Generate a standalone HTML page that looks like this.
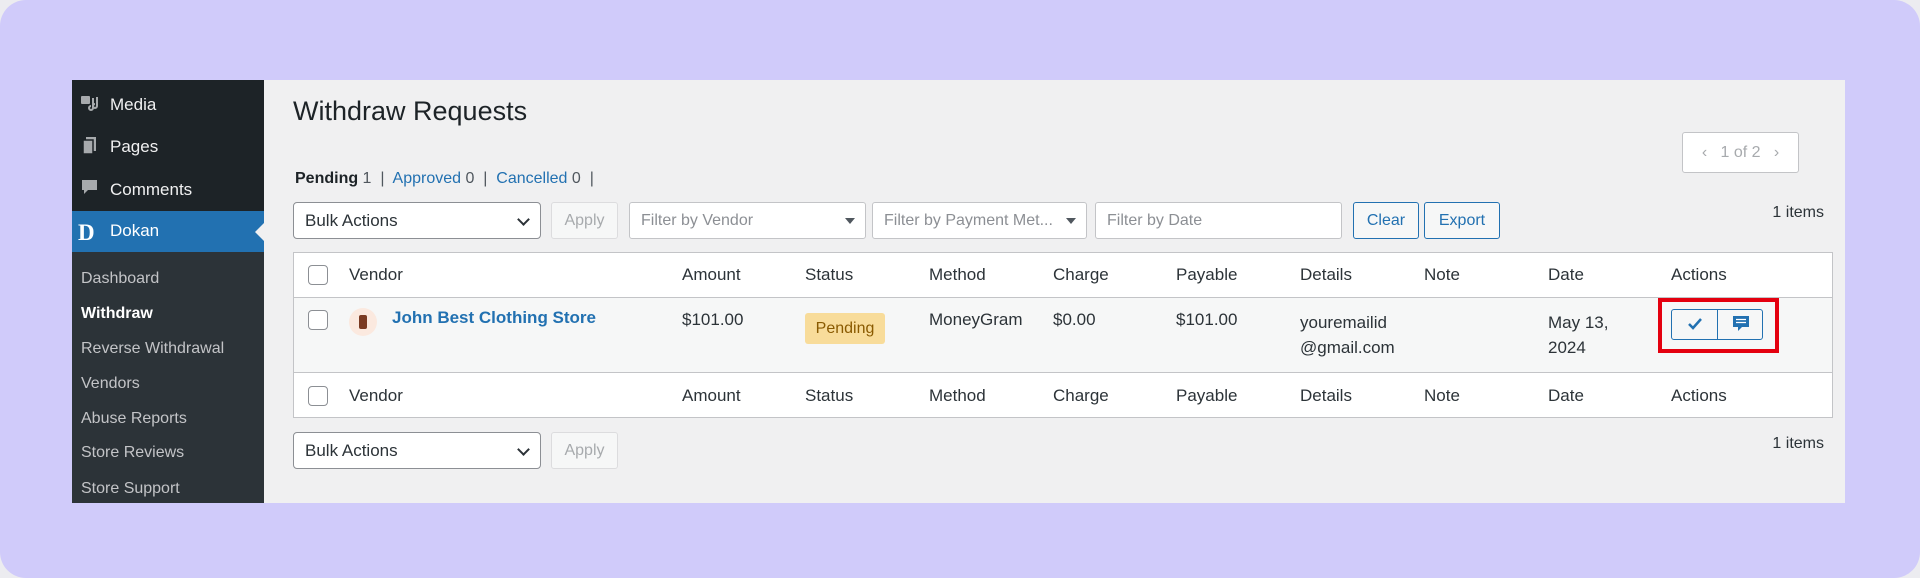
<!DOCTYPE html>
<html><head><style>
*{box-sizing:border-box;margin:0;padding:0}
body{width:1920px;height:578px;background:#ececf0;font-family:"Liberation Sans",sans-serif;position:relative;overflow:hidden}
.bg{position:absolute;left:0;top:0;width:1920px;height:578px;background:#d0cbfa;border-radius:26px}
.panel{position:absolute;left:72px;top:80px;width:1773px;height:423px;background:#f0f0f1}
.side{position:absolute;left:0;top:0;width:192px;height:423px;background:#2c3338}
.sidetop{position:absolute;left:0;top:0;width:192px;height:131px;background:#1d2327}
.a{position:absolute;color:#f0f0f1;font-size:17px;left:38px}
.ic{position:absolute;left:8px;width:20px;height:20px}
.dok{position:absolute;left:0;top:131px;width:192px;height:41px;background:#2271b1}
.s{position:absolute;left:9px;color:#c3c4c7;font-size:16px}
.abs{position:absolute}
.sel{position:absolute;background:#fff;border:1px solid #8c8f94;border-radius:4px;font-size:17px;color:#2c3338;padding:8px 11px;height:37px}
.btn{position:absolute;border:1px solid #dcdcde;border-radius:3px;color:#a7aaad;background:#f6f7f7;font-size:16px;text-align:center;padding-top:9px;height:37px}
.inp{position:absolute;background:#fff;border:1px solid #c3c4c7;border-radius:3px;color:#8c8f94;font-size:16px;padding:9px 11px;height:37px}
.bb{position:absolute;border:1px solid #2271b1;border-radius:3px;color:#2271b1;background:#f6f7f7;font-size:16px;text-align:center;padding-top:9px;height:37px}
.tbl{position:absolute;left:221px;top:172px;width:1540px;height:166px;background:#fff;border:1px solid #c3c4c7}
.row{position:absolute;left:0;width:1538px;background:#f6f7f7;top:44px;height:76px;border-top:1px solid #c3c4c7;border-bottom:1px solid #c3c4c7}
.t{position:absolute;font-size:17px;color:#2c3338}
.cb{position:absolute;left:14px;width:20px;height:20px;border:1px solid #8c8f94;border-radius:4px;background:#fff}
.chev{position:absolute;right:12px;top:12px;width:9px;height:9px;border-right:2px solid #2c3338;border-bottom:2px solid #2c3338;transform:rotate(45deg)}
.tri{position:absolute;right:10px;top:15px;border-left:5px solid transparent;border-right:5px solid transparent;border-top:6px solid #50575e}
</style></head><body>
<div class="bg"></div>
<div class="panel">
 <div class="side">
  <div class="sidetop"></div>
  <svg class="ic" style="top:14px" viewBox="0 0 20 20"><rect x="1" y="2" width="9" height="8" rx="1" fill="#a7aaad"/><path d="M13 4v10a2 2 0 1 1-2-2M17 3v9a2 2 0 1 1-2-2" stroke="#a7aaad" stroke-width="2" fill="none"/></svg>
  <div class="a" style="top:15px">Media</div>
  <svg class="ic" style="top:56px" viewBox="0 0 20 20"><rect x="6" y="1" width="10" height="14" fill="#a7aaad"/><rect x="3" y="4" width="10" height="14" fill="#a7aaad" stroke="#1d2327" stroke-width="1.5"/></svg>
  <div class="a" style="top:57px">Pages</div>
  <svg class="ic" style="top:98px" viewBox="0 0 20 20"><path d="M2 2h15v10H8l-4 4v-4H2z" fill="#a7aaad"/></svg>
  <div class="a" style="top:100px">Comments</div>
  <div class="dok"><div style="position:absolute;left:6px;top:9px;color:#fff;font-weight:bold;font-size:23px;font-family:'Liberation Serif',serif">D</div><div class="a" style="top:10px;color:#fff">Dokan</div>
   <div style="position:absolute;right:0;top:12px;border-top:9px solid transparent;border-bottom:9px solid transparent;border-right:9px solid #f0f0f1"></div></div>
  <div class="s" style="top:190px">Dashboard</div>
  <div class="s" style="top:225px;color:#fff;font-weight:bold">Withdraw</div>
  <div class="s" style="top:260px">Reverse Withdrawal</div>
  <div class="s" style="top:295px">Vendors</div>
  <div class="s" style="top:330px">Abuse Reports</div>
  <div class="s" style="top:364px">Store Reviews</div>
  <div class="s" style="top:400px">Store Support</div>
 </div>
 <div class="abs" style="left:221px;top:16px;font-size:27px;color:#1d2327">Withdraw Requests</div>
 <div class="abs" style="left:223px;top:90px;font-size:16px;color:#50575e"><b style="color:#1d2327">Pending</b> 1 &nbsp;|&nbsp; <span style="color:#2271b1">Approved</span> 0 &nbsp;|&nbsp; <span style="color:#2271b1">Cancelled</span> 0 &nbsp;|</div>
 <div class="abs" style="left:1610px;top:52px;width:117px;height:41px;background:#fff;border:1px solid #c3c4c7;border-radius:3px;color:#a7aaad;font-size:16px;text-align:center;padding-top:11px">‹&nbsp;&nbsp; 1 of 2 &nbsp;&nbsp;›</div>
 <div class="sel" style="left:221px;top:122px;width:248px">Bulk Actions<div class="chev"></div></div>
 <div class="btn" style="left:479px;top:122px;width:67px">Apply</div>
 <div class="inp" style="left:557px;top:122px;width:237px">Filter by Vendor<div class="tri"></div></div>
 <div class="inp" style="left:800px;top:122px;width:215px">Filter by Payment Met...<div class="tri"></div></div>
 <div class="inp" style="left:1023px;top:122px;width:247px">Filter by Date</div>
 <div class="bb" style="left:1281px;top:122px;width:66px">Clear</div>
 <div class="bb" style="left:1352px;top:122px;width:76px">Export</div>
 <div class="abs" style="right:21px;top:124px;font-size:16px;color:#2c3338">1 items</div>
 <div class="tbl">
  <div class="cb" style="top:12px"></div>
  <div class="t" style="left:55px;top:12px">Vendor</div><div class="t" style="left:388px;top:12px">Amount</div><div class="t" style="left:511px;top:12px">Status</div><div class="t" style="left:635px;top:12px">Method</div><div class="t" style="left:759px;top:12px">Charge</div><div class="t" style="left:882px;top:12px">Payable</div><div class="t" style="left:1006px;top:12px">Details</div><div class="t" style="left:1130px;top:12px">Note</div><div class="t" style="left:1254px;top:12px">Date</div><div class="t" style="left:1377px;top:12px">Actions</div>
  <div class="row">
   <div class="cb" style="top:12px"></div>
   <div class="abs" style="left:55px;top:10px;width:28px;height:28px;border-radius:50%;background:#fbe9df"><div style="position:absolute;left:10px;top:7px;width:8px;height:14px;background:#7a3a22;border-radius:2px"></div></div>
   <div class="t" style="left:98px;top:10px;color:#2271b1;font-weight:bold">John Best Clothing Store</div>
   <div class="t" style="left:388px;top:12px">$101.00</div>
   <div class="abs" style="left:511px;top:15px;width:80px;height:31px;background:#f8dc9a;border-radius:3px;color:#8a5a00;font-size:16px;text-align:center;padding-top:7px">Pending</div>
   <div class="t" style="left:635px;top:12px">MoneyGram</div><div class="t" style="left:759px;top:12px">$0.00</div><div class="t" style="left:882px;top:12px">$101.00</div>
   <div class="t" style="left:1006px;top:12px;line-height:25px">youremailid<br>@gmail.com</div>
   <div class="t" style="left:1254px;top:12px;line-height:25px">May 13,<br>2024</div>
   <div class="abs" style="left:1364px;top:0px;width:121px;height:55px;border:4px solid #e4000f"></div>
   <div class="abs" style="left:1377px;top:11px;width:92px;height:31px;border:1px solid #2271b1;border-radius:3px;background:#f6f7f7">
    <div style="position:absolute;left:45px;top:0;width:1px;height:29px;background:#2271b1"></div>
    <svg style="position:absolute;left:15px;top:7px" width="16" height="14" viewBox="0 0 16 14"><path d="M2 7l4 4 8-9" stroke="#2271b1" stroke-width="2.5" fill="none"/></svg>
    <svg style="position:absolute;left:59px;top:5px" width="20" height="20" viewBox="0 0 20 20"><path d="M2 1h16v11h-7l-4 4v-4H2z" fill="#2271b1"/><path d="M5 4.5h10M5 7.5h10" stroke="#fff" stroke-width="1.3"/></svg>
   </div>
  </div>
  <div class="cb" style="top:133px"></div>
  <div class="t" style="left:55px;top:133px">Vendor</div><div class="t" style="left:388px;top:133px">Amount</div><div class="t" style="left:511px;top:133px">Status</div><div class="t" style="left:635px;top:133px">Method</div><div class="t" style="left:759px;top:133px">Charge</div><div class="t" style="left:882px;top:133px">Payable</div><div class="t" style="left:1006px;top:133px">Details</div><div class="t" style="left:1130px;top:133px">Note</div><div class="t" style="left:1254px;top:133px">Date</div><div class="t" style="left:1377px;top:133px">Actions</div>
 </div>
 <div class="sel" style="left:221px;top:352px;width:248px">Bulk Actions<div class="chev"></div></div>
 <div class="btn" style="left:479px;top:352px;width:67px">Apply</div>
 <div class="abs" style="right:21px;top:355px;font-size:16px;color:#2c3338">1 items</div>
</div>
</body></html>
